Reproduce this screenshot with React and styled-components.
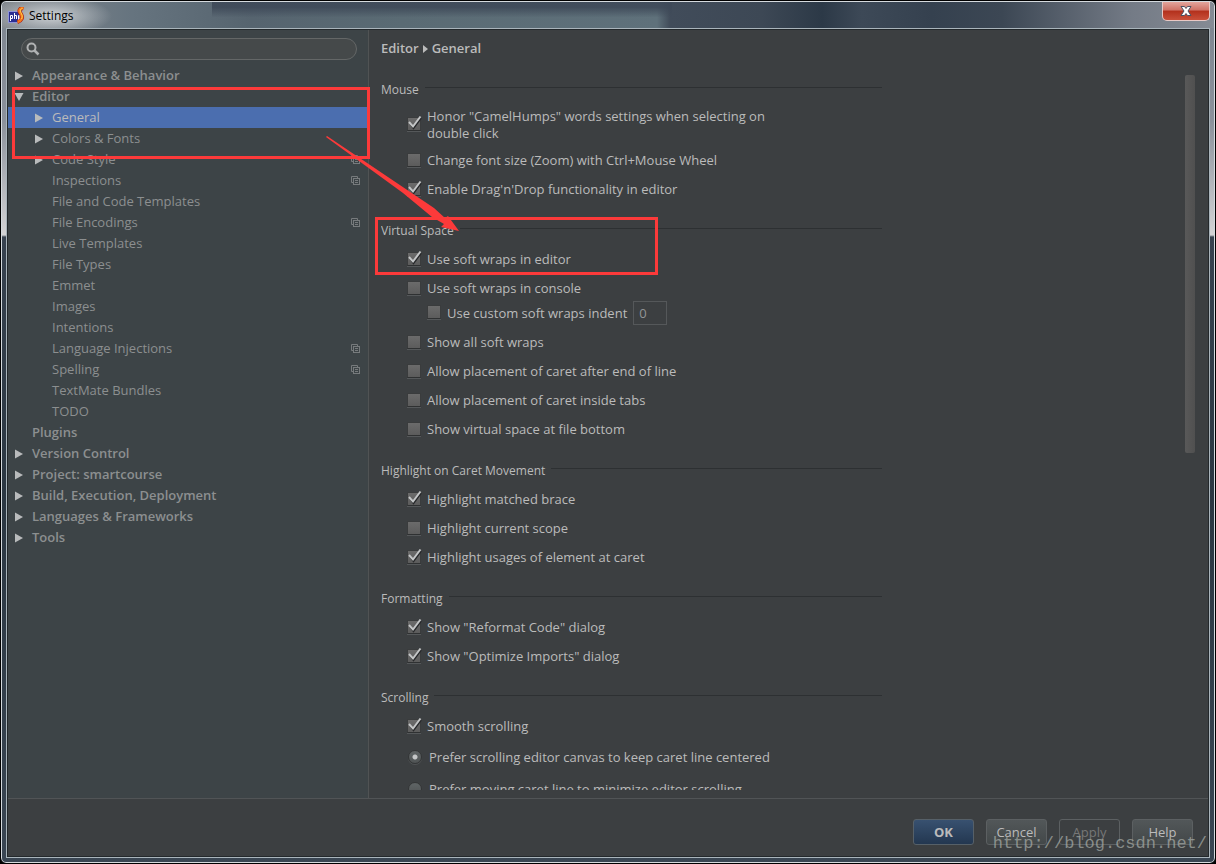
import React, { useState } from 'react'
import styled, { createGlobalStyle, css } from 'styled-components'

const tree = [
  { name: 'Appearance & Behavior', top: true, arrow: 'right' },
  { name: 'Editor', top: true, arrow: 'down' },
  { name: 'General', arrow: 'right' },
  { name: 'Colors & Fonts', arrow: 'right' },
  { name: 'Code Style', arrow: 'right', project: true },
  { name: 'Inspections', project: true },
  { name: 'File and Code Templates' },
  { name: 'File Encodings', project: true },
  { name: 'Live Templates' },
  { name: 'File Types' },
  { name: 'Emmet' },
  { name: 'Images' },
  { name: 'Intentions' },
  { name: 'Language Injections', project: true },
  { name: 'Spelling', project: true },
  { name: 'TextMate Bundles' },
  { name: 'TODO' },
  { name: 'Plugins', top: true },
  { name: 'Version Control', top: true, arrow: 'right' },
  { name: 'Project: smartcourse', top: true, arrow: 'right' },
  { name: 'Build, Execution, Deployment', top: true, arrow: 'right' },
  { name: 'Languages & Frameworks', top: true, arrow: 'right' },
  { name: 'Tools', top: true, arrow: 'right' },
]

const sections = [
  {
    title: 'Mouse',
    options: [
      { label: 'Honor "CamelHumps" words settings when selecting on double click', on: true, tall: true },
      { label: 'Change font size (Zoom) with Ctrl+Mouse Wheel' },
      { label: "Enable Drag'n'Drop functionality in editor", on: true },
    ],
  },
  {
    title: 'Virtual Space',
    options: [
      { label: 'Use soft wraps in editor', on: true },
      { label: 'Use soft wraps in console' },
      { label: 'Use custom soft wraps indent', sub: true },
      { label: 'Show all soft wraps' },
      { label: 'Allow placement of caret after end of line' },
      { label: 'Allow placement of caret inside tabs' },
      { label: 'Show virtual space at file bottom' },
    ],
  },
  {
    title: 'Highlight on Caret Movement',
    options: [
      { label: 'Highlight matched brace', on: true },
      { label: 'Highlight current scope' },
      { label: 'Highlight usages of element at caret', on: true },
    ],
  },
  {
    title: 'Formatting',
    options: [
      { label: 'Show "Reformat Code" dialog', on: true },
      { label: 'Show "Optimize Imports" dialog', on: true },
    ],
  },
  {
    title: 'Scrolling',
    options: [
      { label: 'Smooth scrolling', on: true },
      { label: 'Prefer scrolling editor canvas to keep caret line centered', radio: true, on: true },
      { label: 'Prefer moving caret line to minimize editor scrolling', radio: true },
    ],
  },
]

function Arrow({ dir }) {
  return (
    <svg width="10" height="10" viewBox="0 0 10 10">
      {dir === 'right' && <path d="M1 0.500L9 5L1 9.500Z" fill="#b9bbbc" />}
      {dir === 'down' && <path d="M0.500 1H9.500L5 9Z" fill="#b9bbbc" />}
    </svg>
  )
}

function ProjectIcon() {
  return (
    <svg width="10" height="10" viewBox="0 0 10 10" fill="none" stroke="#777b7d">
      <path d="M2.5 6.5H0.5V0.5H6.5V2.5" />
      <rect x="2.5" y="2.5" width="6" height="6" />
      <path d="M4 4.5H7M4 6.5H7" />
    </svg>
  )
}

function AppIcon() {
  return (
    <svg width="17" height="17" viewBox="0 0 17 17">
      <rect x="0.5" y="4.5" width="12" height="11" fill="#2b2f92" stroke="#8f93d8" />
      <path
        d="M2.5 14V8.5H4.5V11.5H2.5M6.5 6V12M6.5 8.5H8.5V12M10.5 14V8.5H12V11.5H10.5"
        fill="none"
        stroke="#fff"
      />
      <path d="M15.500 1.500C12.500 0.500 10.500 3 12 5.500C13.500 8 15 9.500 13.500 12C12.800 13.500 11.500 14.500 9.500 15" fill="none" stroke="#b02410" strokeWidth="4" />
      <path d="M15.500 1.500C12.500 0.500 10.500 3 12 5.500C13.500 8 15 9.500 13.500 12C12.800 13.500 11.500 14.500 9.500 15" fill="none" stroke="#f5781e" strokeWidth="2.600" />
      <path d="M14.500 1.500C12.500 1.500 11.500 3.500 12.800 5.500C14 7.500 15 9.500 13.500 12" fill="none" stroke="#ffd24a" />
    </svg>
  )
}

function Option({ option }) {
  const [checked, setChecked] = useState(!!option.on)
  const [indent, setIndent] = useState('0')

  if (option.radio) {
    return (
      <Row $radio>
        <label>
          <Radio name="scrolling" defaultChecked={option.on} />
          <span>{option.label}</span>
        </label>
      </Row>
    )
  }
  return (
    <Row $tall={option.tall} $sub={option.sub}>
      <label>
        <CheckWrap>
          <Check checked={checked} onChange={(e) => setChecked(e.target.checked)} />
          {checked && (
            <svg width="16" height="16" viewBox="0 0 16 16" fill="none">
              <path d="M4 8L7.500 13L15 3" stroke="#26282a" strokeWidth="2" />
              <path d="M3 7L7 11.500L14.500 1.500" stroke="#c4c6c7" strokeWidth="2" />
            </svg>
          )}
        </CheckWrap>
        <span>{option.label}</span>
      </label>
      {option.sub && (
        <IndentInput
          aria-label="Soft wraps indent"
          value={indent}
          onChange={(e) => setIndent(e.target.value)}
        />
      )}
    </Row>
  )
}

function App() {
  const [selected, setSelected] = useState('General')
  const [query, setQuery] = useState('')

  return (
    <Window>
      <GlobalStyle />
      <TitleBar>
        <AppIcon />
        <h1>Settings</h1>
        <CloseButton aria-label="Close">
          <svg width="12" height="10" viewBox="0 0 12 10">
            <path d="M1 0.500H4.500L6 2.500L7.500 0.500H11L8 5L11 9.500H7.500L6 7.500L4.500 9.500H1L4 5Z" fill="#fff" stroke="#4a5062" />
          </svg>
        </CloseButton>
      </TitleBar>
      <Client>
        <Body>
          <Sidebar>
            <Search>
              <svg width="14" height="14" viewBox="0 0 14 14" fill="none" stroke="#b0b2b3">
                <circle cx="5.500" cy="5.500" r="4" strokeWidth="2" />
                <path d="M8.500 8.500L12.500 12.500" strokeWidth="2.500" />
              </svg>
              <input aria-label="Search settings" value={query} onChange={(e) => setQuery(e.target.value)} />
            </Search>
            <nav>
              {tree.map((item) => (
                <TreeItem
                  key={item.name}
                  $top={item.top}
                  $active={item.name === selected}
                  onClick={() => setSelected(item.name)}
                >
                  <Arrow dir={item.arrow} />
                  <span>{item.name}</span>
                  {item.project && <ProjectIcon />}
                </TreeItem>
              ))}
            </nav>
          </Sidebar>
          <Main>
            <Breadcrumb>
              Editor
              <svg width="5" height="8" viewBox="0 0 5 8">
                <path d="M0 0L5 4L0 8Z" fill="#bbb" />
              </svg>
              General
            </Breadcrumb>
            <Scroller>
              <Options>
                {sections.map((section) => (
                  <Section key={section.title}>
                    <SectionTitle>{section.title}</SectionTitle>
                    {section.options.map((option) => (
                      <Option key={option.label} option={option} />
                    ))}
                  </Section>
                ))}
              </Options>
              <ScrollThumb />
            </Scroller>
          </Main>
        </Body>
        <Footer>
          <Button $primary>OK</Button>
          <Button>Cancel</Button>
          <Button disabled>Apply</Button>
          <Button>Help</Button>
        </Footer>
      </Client>
      <Mark $x={12} $y={87} $w={358} $h={72} />
      <Mark $x={375} $y={217} $w={283} $h={58} />
      <MarkArrow width="134" height="96" viewBox="0 0 134 96">
        <path d="M0 1L1 0L108 72L119 82L122 80L133 95L115 91L118 88L106 81L77 57Z" fill="#fc3a3a" />
      </MarkArrow>
      <Watermark>http://blog.csdn.net/</Watermark>
    </Window>
  )
}

const GlobalStyle = createGlobalStyle`
  * {
    box-sizing: border-box;
  }
  body {
    margin: 0;
    background: #000;
    color: #bbbbbb;
    font: 13px/17px "Open Sans", "Noto Sans", sans-serif;
  }
  button, input {
    font: inherit;
    color: inherit;
  }
`

const Window = styled.div`
  position: relative;
  display: flex;
  flex-direction: column;
  height: 100vh;
  padding: 0 5px 5px;
  border: 1px solid #000;
  border-radius: 6px;
  box-shadow: inset 0 0 0 1px #d5dade;
  background: linear-gradient(#7c848e 0, #8b919b 120px, #d3d3d5 234px, #37424f 236px, #2b3742 500px, #3a4653 100%);
`

const TitleBar = styled.header`
  display: flex;
  align-items: center;
  height: 26px;
  flex-shrink: 0;
  margin: 1px -4px 0;
  padding: 0 4px 0 6px;
  gap: 4px;
  border-radius: 5px 5px 0 0;
  background:
    radial-gradient(ellipse 60px 20px at 50px 14px, rgba(225, 228, 230, 0.8), transparent),
    linear-gradient(rgba(62, 73, 88, 0.9) 20%, transparent 60%) 210px 0 / 460px 100% no-repeat,
    linear-gradient(90deg, #858a90 0, #66747f 130px, #56646f 250px, #5a6b74 400px, #5f717b 655px, #414c5a 668px, #3d4855 760px, #2c3947 820px, #3d4957 860px, #35414f 930px, #3c4754 1000px, #747b86 1130px, #858b94 100%);
  h1 {
    flex: 1;
    margin: 0;
    color: #000;
    font-size: 12px;
    font-weight: 400;
  }
`

const CloseButton = styled.button`
  display: flex;
  align-items: center;
  justify-content: center;
  align-self: flex-start;
  width: 48px;
  height: 19px;
  padding: 0;
  border: 1px solid #e9c9c5;
  border-top: none;
  border-radius: 0 0 5px 5px;
  background: linear-gradient(#e3a59c 0, #cf7266 45%, #b3301c 50%, #c9503a 100%);
`

const Client = styled.div`
  display: flex;
  flex-direction: column;
  flex: 1;
  min-height: 0;
  border: 1px solid #a9b4bb;
  box-shadow: inset 0 0 0 1px #23282b;
  padding: 1px;
  background: #3c3f41;
`

const Body = styled.div`
  display: flex;
  flex: 1;
  min-height: 0;
`

const Sidebar = styled.aside`
  width: 361px;
  flex-shrink: 0;
  padding-top: 8px;
  border-right: 1px solid #505354;
  background: #3d4447;
`

const Search = styled.label`
  display: flex;
  align-items: center;
  gap: 4px;
  height: 22px;
  margin: 0 11px 5px 13px;
  padding: 0 4px;
  border: 1px solid #646767;
  border-radius: 11px;
  background: #45494a;
  input {
    flex: 1;
    min-width: 0;
    border: none;
    outline: none;
    background: transparent;
  }
`

const TreeItem = styled.button`
  display: flex;
  align-items: center;
  width: 100%;
  height: 21px;
  padding: 0 7px 0 ${(p) => (p.$top ? 6 : 26)}px;
  gap: 8px;
  border: none;
  background: ${(p) => (p.$active ? '#4b6eaf' : 'transparent')};
  color: ${(p) => (p.$active ? '#bbbbbb' : '#8c8f90')};
  font-weight: ${(p) => (p.$top ? 600 : 400)};
  text-align: left;
  span {
    flex: 1;
  }
`

const Main = styled.main`
  display: flex;
  flex-direction: column;
  flex: 1;
  min-width: 0;
  padding: 0 13px 8px 12px;
`

const Breadcrumb = styled.div`
  display: flex;
  align-items: center;
  gap: 4px;
  height: 37px;
  margin-bottom: 8px;
  flex-shrink: 0;
  font-weight: 600;
`

const Scroller = styled.div`
  display: flex;
  justify-content: space-between;
  flex: 1;
  min-height: 0;
  overflow: hidden;
`

const Options = styled.div`
  flex: 1;
  max-width: 501px;
`

const ScrollThumb = styled.div`
  width: 10px;
  height: 378px;
  border-radius: 2px;
  background: linear-gradient(90deg, #595959, #505050);
`

const Section = styled.section`
  margin-bottom: 12px;
`

const SectionTitle = styled.h2`
  display: flex;
  align-items: center;
  gap: 6px;
  height: 29px;
  margin: 0;
  font-size: 12px;
  font-weight: 400;
  &::after {
    content: '';
    flex: 1;
    height: 1px;
    margin-bottom: 4px;
    background: #2d3032;
  }
`

const Row = styled.div`
  display: flex;
  align-items: center;
  height: 29px;
  padding-left: 25px;
  label {
    display: flex;
    align-items: center;
    gap: 5px;
  }
  ${(p) => p.$tall && css`
    height: 42px;
    label {
      max-width: 360px;
    }
  `}
  ${(p) => p.$sub && css`
    height: 24px;
    margin: -2px 0 3px;
    padding-left: 45px;
    gap: 6px;
  `}
  ${(p) => p.$radio && css`
    height: 32px;
    padding-left: 27px;
    label {
      gap: 7px;
    }
  `}
`

const CheckWrap = styled.span`
  position: relative;
  display: flex;
  flex-shrink: 0;
  margin-bottom: 2px;
  padding: 0 1px;
  svg {
    position: absolute;
    top: -2px;
    left: 0;
    pointer-events: none;
  }
`

const Check = styled.input.attrs({ type: 'checkbox' })`
  appearance: none;
  width: 14px;
  height: 14px;
  margin: 0;
  border: 1px solid #3a3c3d;
  border-bottom-color: #2f3132;
  background: linear-gradient(#6b6b6b, #5c5c5c);
  box-shadow: 0 1px 0 #55585a;
`

const Radio = styled.input.attrs({ type: 'radio' })`
  appearance: none;
  flex-shrink: 0;
  width: 14px;
  height: 14px;
  margin: 0;
  border: 1px solid #343637;
  border-radius: 50%;
  background: linear-gradient(#5f6465, #505455);
  box-shadow: 0 1px 0 #505355;
  &:checked {
    background: radial-gradient(circle, #c4c6c7 0 2px, transparent 3px), linear-gradient(#5f6465, #505455);
  }
`

const IndentInput = styled.input`
  width: 34px;
  height: 24px;
  padding: 0 5px;
  border: 1px solid #55585a;
  background: #3c3f41;
  color: #939596;
`

const Footer = styled.footer`
  display: flex;
  gap: 12px;
  height: 58px;
  justify-content: flex-end;
  align-items: flex-start;
  padding: 20px 15px 0;
  border-top: 1px solid #515456;
`

const Button = styled.button`
  width: 61px;
  height: 26px;
  padding: 0;
  border: 1px solid #5c6062;
  border-radius: 3px;
  background: linear-gradient(#525759, #434849);
  ${(p) => p.$primary && css`
    border-color: #566068;
    background: linear-gradient(#385170, #233750);
    font-weight: 700;
  `}
  &:disabled {
    background: transparent;
    color: #777777;
  }
`

const Mark = styled.div`
  position: absolute;
  left: ${(p) => p.$x - 1}px;
  top: ${(p) => p.$y - 1}px;
  width: ${(p) => p.$w}px;
  height: ${(p) => p.$h}px;
  border: 3px solid #fc3a3a;
  pointer-events: none;
`

const MarkArrow = styled.svg`
  position: absolute;
  left: 325px;
  top: 135px;
  pointer-events: none;
`

const Watermark = styled.div`
  position: absolute;
  right: 8px;
  bottom: 9px;
  color: rgba(170, 175, 170, 0.7);
  font: 17px/20px "Liberation Mono", monospace;
  pointer-events: none;
`

export default App
